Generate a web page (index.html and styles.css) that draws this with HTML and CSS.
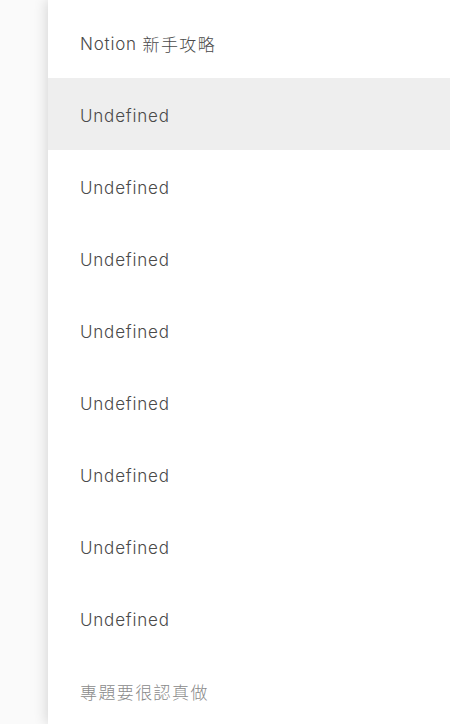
FILE: index.html
```html
<!DOCTYPE html>
<html>
<head>
<meta charset="utf-8">
<link rel="stylesheet" href="styles.css">
</head>
<body>
<div class="page">
  <div class="side"></div>
  <div class="panel">
    <ul class="list">
      <li class="item">Notion <span class="cjk">新手攻略</span></li>
      <li class="item active">Undefined</li>
      <li class="item">Undefined</li>
      <li class="item">Undefined</li>
      <li class="item">Undefined</li>
      <li class="item">Undefined</li>
      <li class="item">Undefined</li>
      <li class="item">Undefined</li>
      <li class="item">Undefined</li>
      <li class="item muted"><span class="cjk">專題要很認真做</span></li>
    </ul>
  </div>
</div>
</body>
</html>
```
FILE: styles.css
```css
html, body {
  margin: 0;
  padding: 0;
  height: 100%;
  overflow: hidden;
}
body {
  background: #fafafa;
  font-family: Inter, "Noto Sans CJK TC", sans-serif;
}
.page {
  display: flex;
  height: 724px;
}
.side {
  width: 48px;
  flex: none;
}
.panel {
  flex: 1;
  background: #fff;
  box-shadow: -2px 0 12px rgba(0, 0, 0, 0.14);
  overflow: hidden;
}
.list {
  list-style: none;
  margin: 6px 0 0 0;
  padding: 0;
}
.item {
  height: 72px;
  box-sizing: border-box;
  padding-top: 3px;
  display: flex;
  align-items: center;
  padding-left: 32px;
  font-size: 17px;
  font-weight: 300;
  letter-spacing: 0.8px;
  color: #4a4a4a;
  white-space: pre;
}
.cjk {
  letter-spacing: 1.4px;
}
.item.active {
  background: #eeeeee;
}
.item.muted {
  color: #8a8a8a;
}
```
